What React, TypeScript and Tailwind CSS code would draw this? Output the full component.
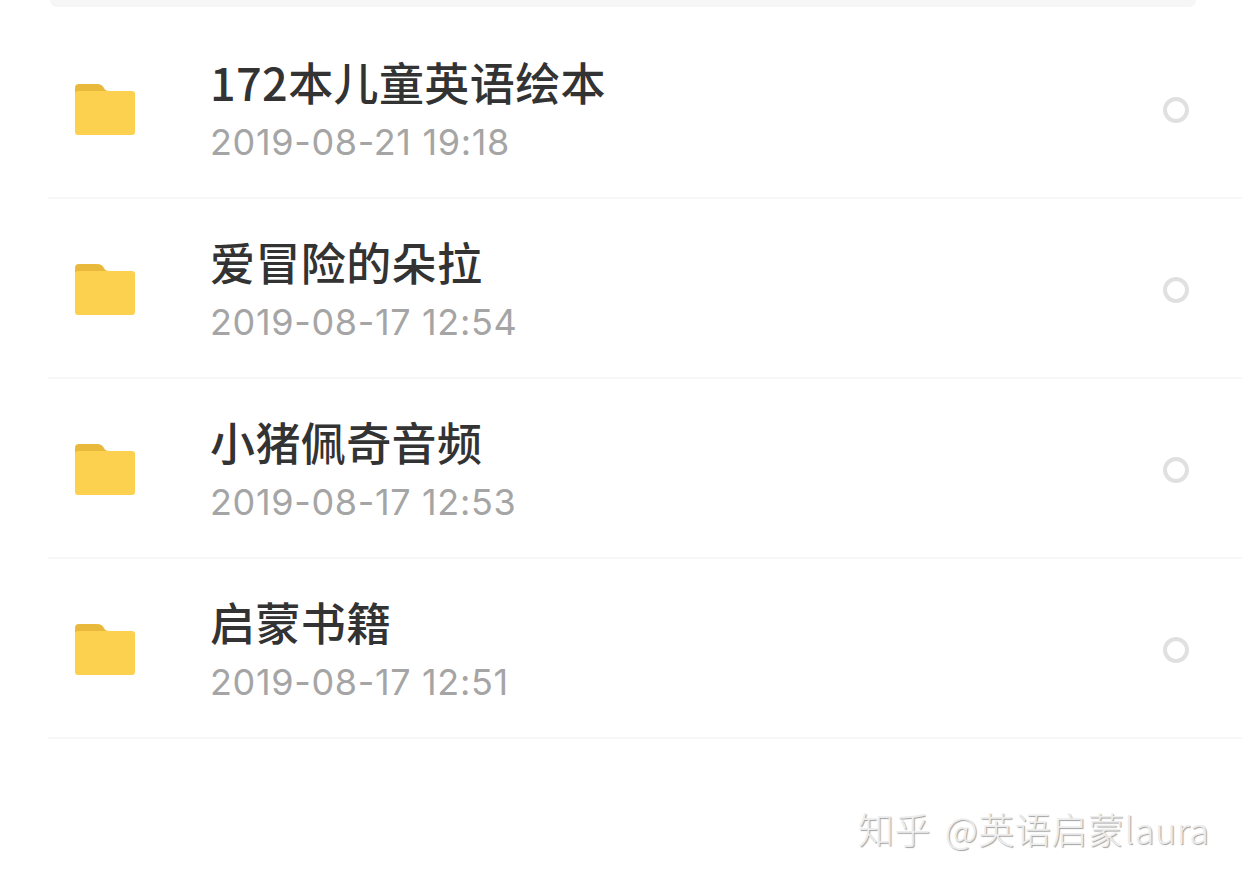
const rows = [
  { title: "172本儿童英语绘本", date: "2019-08-21 19:18" },
  { title: "爱冒险的朵拉", date: "2019-08-17 12:54" },
  { title: "小猪佩奇音频", date: "2019-08-17 12:53" },
  { title: "启蒙书籍", date: "2019-08-17 12:51" },
];

function Folder() {
  return (
    <svg width="60" height="52" viewBox="0 0 60 52" className="block">
      <path d="M0 4 Q0 0 4 0 H22 Q27 0 29 4 Q30 7 34 7 V20 H0 Z" fill="#e9b93c" />
      <path d="M0 10 Q0 7 3 7 H57 Q60 7 60 10 V48 Q60 51 57 51 H3 Q0 51 0 48 Z" fill="#fcd14f" />
    </svg>
  );
}

export default function App() {
  return (
    <div className="relative w-[1242px] h-[880px] overflow-hidden bg-white font-['Inter','Noto_Sans_CJK_SC',sans-serif]">
      <div className="h-[7px] w-[1146px] ml-[50px] rounded-b-[10px] bg-[#f6f6f6]" />
      <div className="mt-[12px] ml-[48px] flex flex-col">
        {rows.map((r) => (
          <div key={r.date} className="flex h-[180px] items-center border-b-2 border-[#f7f7f7]">
            <div className="ml-[27px] mt-[3px] w-[135px] shrink-0">
              <Folder />
            </div>
            <div className="flex-1 pt-[4px]">
              <div className="text-[45px] leading-[52px] font-medium tracking-[0.4px] text-[#333333] font-['Noto_Sans_CJK_SC',sans-serif]">{r.title}</div>
              <div className="mt-[12px] text-[36px] leading-[44px] text-[#a5a5a5] tracking-[0.65px]">{r.date}</div>
            </div>
            <div className="mr-[53px] mt-[4px] h-[26px] w-[26px] shrink-0 rounded-full border-[4px] border-[#e0e0e0]" />
          </div>
        ))}
      </div>
      <div className="absolute left-[858px] top-[806px] flex items-center text-[36px] leading-[44px] font-light text-[#ededed] font-['Noto_Sans_CJK_SC',sans-serif] [text-shadow:1px_1px_1px_#a0a0a0]">
        <span className="tracking-[0.5px]">知乎</span>
        <span className="ml-[14px] tracking-[0.55px]">@英语启蒙laura</span>
      </div>
    </div>
  );
}
